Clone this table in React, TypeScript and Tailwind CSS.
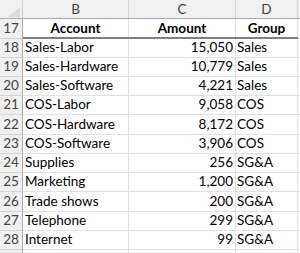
import React from "react";

const rows: { n: number; a: string; b: string; c: string; h: number }[] = [
  { n: 18, a: "Sales-Labor", b: "15,050", c: "Sales", h: 19 },
  { n: 19, a: "Sales-Hardware", b: "10,779", c: "Sales", h: 19 },
  { n: 20, a: "Sales-Software", b: "4,221", c: "Sales", h: 19 },
  { n: 21, a: "COS-Labor", b: "9,058", c: "COS", h: 19 },
  { n: 22, a: "COS-Hardware", b: "8,172", c: "COS", h: 20 },
  { n: 23, a: "COS-Software", b: "3,906", c: "COS", h: 19 },
  { n: 24, a: "Supplies", b: "256", c: "SG&A", h: 19 },
  { n: 25, a: "Marketing", b: "1,200", c: "SG&A", h: 19 },
  { n: 26, a: "Trade shows", b: "200", c: "SG&A", h: 20 },
  { n: 27, a: "Telephone", b: "299", c: "SG&A", h: 19 },
  { n: 28, a: "Internet", b: "99", c: "SG&A", h: 19 },
];

const font = { fontFamily: "Lato, 'Open Sans', sans-serif" };

export default function App() {
  return (
    <div className="w-[300px] h-[253px] overflow-hidden bg-white text-[13.5px] leading-none text-black whitespace-nowrap" style={font}>
      {/* column header */}
      <div className="flex h-[19px] bg-[#f0f0f0] border-b border-[#ababab] text-[#444]">
        <div className="w-[23px] shrink-0 border-r border-[#d4d4d4] relative">
          <svg className="absolute left-[8px] top-[7px]" width="12" height="10" viewBox="0 0 12 10">
            <polygon points="12,0 12,10 0,10" fill="#dcdcdc" />
          </svg>
        </div>
        <div className="w-[106px] shrink-0 border-r border-[#d4d4d4] flex items-center justify-center pt-[1px]">B</div>
        <div className="w-[107px] shrink-0 border-r border-[#d4d4d4] flex items-center justify-center pt-[1px]">C</div>
        <div className="w-[62px] shrink-0 border-r border-[#d4d4d4] flex items-center justify-center pt-[1px]">D</div>
        <div className="flex-1" />
      </div>
      {/* row 17 */}
      <div className="flex h-[20px]">
        <div className="w-[23px] shrink-0 bg-[#f0f0f0] border-r border-[#ababab] border-b border-b-[#d4d4d4] flex items-end justify-center pb-[3px] text-[#444]">17</div>
        <div className="flex border-b-2 border-[#808080] font-bold">
          <div className="w-[106px] shrink-0 border-r border-[#e1e1e1] flex items-end pb-[2px] justify-center">Account</div>
          <div className="w-[107px] shrink-0 border-r border-[#e1e1e1] flex items-end pb-[2px] justify-center">Amount</div>
          <div className="w-[62px] shrink-0 border-r border-[#e1e1e1] flex items-end pb-[2px] justify-center">Group</div>
        </div>
        <div className="flex-1 border-b border-[#e1e1e1]" />
      </div>
      {rows.map((r) => (
        <div key={r.n} className="flex" style={{ height: r.h }}>
          <div className="w-[23px] shrink-0 bg-[#f0f0f0] border-r border-[#ababab] border-b border-b-[#d4d4d4] flex items-end pb-[3px] justify-center text-[#444]">{r.n}</div>
          <div className="w-[106px] shrink-0 border-r border-b border-[#e1e1e1] flex items-end pb-[3px] pl-[2px]">{r.a}</div>
          <div className="w-[107px] shrink-0 border-r border-b border-[#e1e1e1] flex items-end pb-[3px] justify-end pr-[2px]">{r.b}</div>
          <div className="w-[62px] shrink-0 border-r border-b border-[#e1e1e1] flex items-end pb-[3px] pl-[1px]">{r.c}</div>
          <div className="flex-1 border-b border-[#e1e1e1]" />
        </div>
      ))}
      <div className="flex h-[19px]">
        <div className="w-[23px] shrink-0 bg-[#f0f0f0] border-r border-[#ababab]" />
        <div className="w-[106px] shrink-0 border-r border-[#e1e1e1]" />
        <div className="w-[107px] shrink-0 border-r border-[#e1e1e1]" />
        <div className="w-[62px] shrink-0 border-r border-[#e1e1e1]" />
      </div>
    </div>
  );
}
